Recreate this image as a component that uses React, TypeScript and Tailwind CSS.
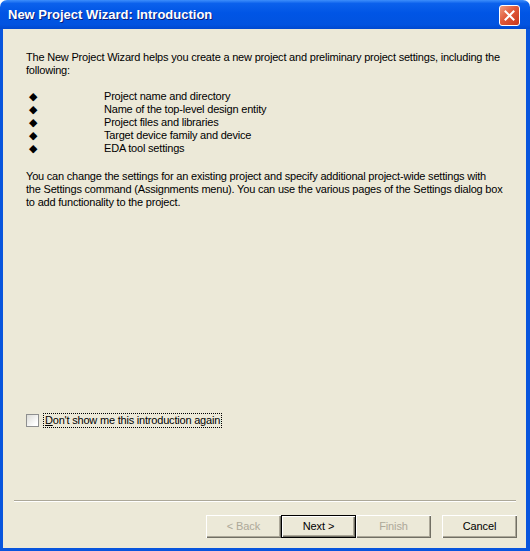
import React from 'react';

const font = { fontFamily: '"Liberation Sans", Arial, sans-serif' };

const bullets = [
  'Project name and directory',
  'Name of the top-level design entity',
  'Project files and libraries',
  'Target device family and device',
  'EDA tool settings',
];

function WizButton({ label, disabled, isDefault }: { label: string; disabled?: boolean; isDefault?: boolean }) {
  return (
    <button
      className={
        'flex h-[23px] w-[75px] items-center justify-center bg-[#ECE9D8] text-[11px] tracking-[-0.1px] ' +
        (isDefault
          ? 'border border-black shadow-[inset_1px_1px_0_#fff,inset_-1px_-1px_0_#716F64,inset_-2px_-2px_0_#ACA899] '
          : 'shadow-[inset_1px_1px_0_#fff,inset_-1px_-1px_0_#716F64,inset_-2px_-2px_0_#ACA899] ') +
        (disabled ? 'text-[#ACA899]' : 'text-black')
      }
    >
      {label}
    </button>
  );
}

export default function App() {
  return (
    <div className="flex h-[551px] w-[530px] flex-col overflow-hidden" style={font}>
      <div className="flex h-[29px] shrink-0 items-center justify-between rounded-t-[7px] bg-[linear-gradient(to_bottom,#3D8EFB_0%,#0B61EC_12%,#0055E5_45%,#0153E0_85%,#0048CF_100%)] pl-[8px] pr-[10px]">
        <span className="text-[13px] font-bold text-white [text-shadow:1px_1px_0_#0A1D7A]">New Project Wizard: Introduction</span>
        <div className="mt-[1px] flex h-[21px] w-[21px] items-center justify-center rounded-[3px] border border-white bg-[linear-gradient(135deg,#F09C7E_0%,#E0593A_45%,#C8361A_100%)]">
          <svg width="11" height="11" viewBox="0 0 11 11">
            <path d="M1.5 1.5 L9.5 9.5 M9.5 1.5 L1.5 9.5" stroke="#fff" strokeWidth="2" strokeLinecap="square" />
          </svg>
        </div>
      </div>
      <div className="flex flex-1 flex-col border-x-[3px] border-b-[3px] border-r-[4px] border-[#0855DD] bg-[#ECE9D8] text-[11px] leading-[13px] tracking-[-0.2px] text-black">
        <div className="flex flex-1 flex-col whitespace-nowrap pl-[23px] pt-[22px]">
          <p>
            The New Project Wizard helps you create a new project and preliminary project settings, including the
            <br />
            following:
          </p>
          <ul className="mt-[13px]">
            {bullets.map((b) => (
              <li key={b} className="flex">
                <span className="w-[78px] pl-[3px] text-[11px]">◆</span>
                <span>{b}</span>
              </li>
            ))}
          </ul>
          <p className="mt-[15px]">
            You can change the settings for an existing project and specify additional project-wide settings with
            <br />
            the Settings command (Assignments menu). You can use the various pages of the Settings dialog box
            <br />
            to add functionality to the project.
          </p>
          <label className="mb-[72px] mt-auto flex items-center gap-[4px]">
            <span className="h-[13px] w-[13px] border border-[#8E8F8F] bg-[linear-gradient(135deg,#DCDCD7_0%,#fff_80%)]" />
            <span className="border border-dotted border-black px-[1px]">
              <span className="underline">D</span>on't show me this introduction again
            </span>
          </label>
        </div>
        <div className="ml-[11px] mr-[10px] h-[2px] border-t border-b border-t-[#ACA899] border-b-white" />
        <div className="flex justify-end pb-[10px] pr-[9px] pt-[13px]">
          <WizButton label="< Back" disabled />
          <WizButton label="Next >" isDefault />
          <WizButton label="Finish" disabled />
          <div className="w-[11px]" />
          <WizButton label="Cancel" />
        </div>
      </div>
    </div>
  );
}
